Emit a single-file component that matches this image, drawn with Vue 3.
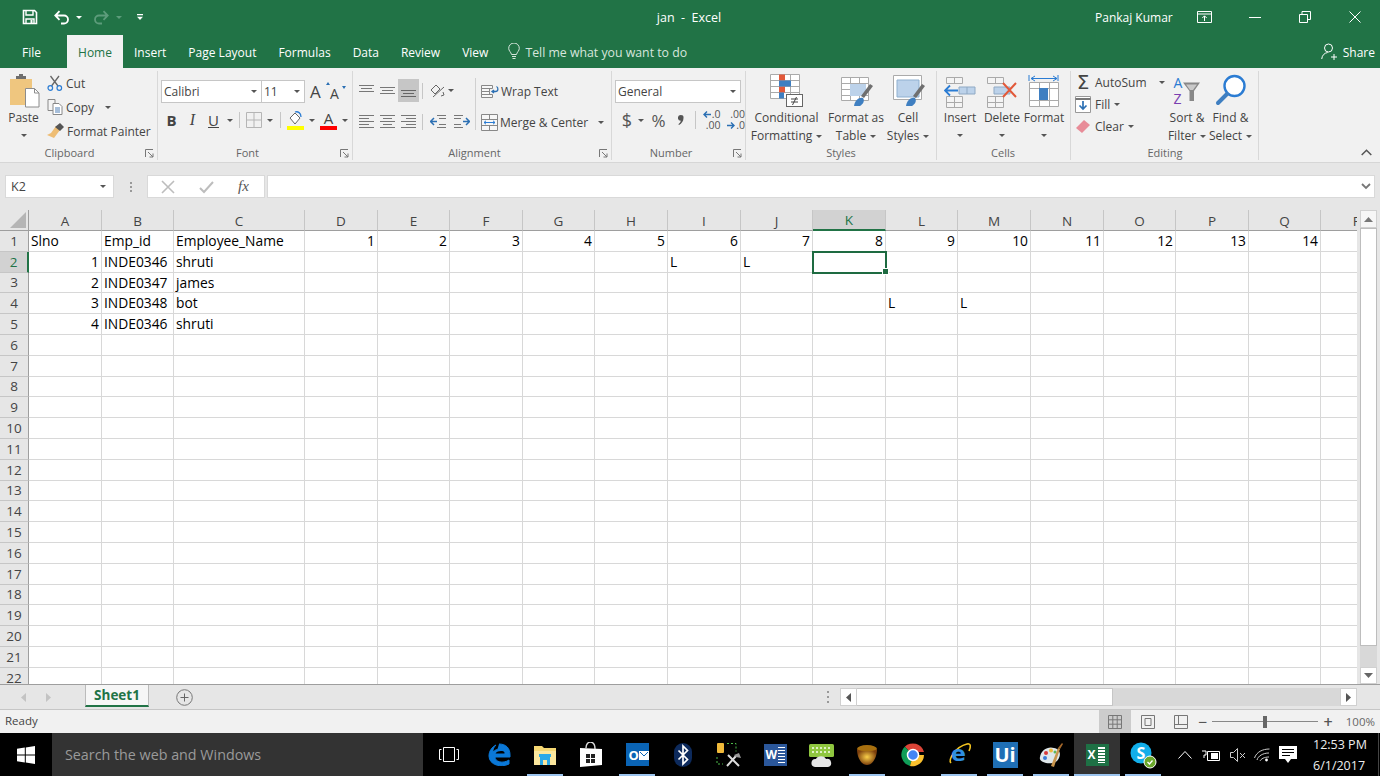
<script setup>
const letters = 'ABCDEFGHIJKLMNOPQR'.split('')

const data = {
  A1: 'Slno', B1: 'Emp_id', C1: 'Employee_Name',
  A2: 1, B2: 'INDE0346', C2: 'shruti', I2: 'L', J2: 'L',
  A3: 2, B3: 'INDE0347', C3: 'james',
  A4: 3, B4: 'INDE0348', C4: 'bot', L4: 'L', M4: 'L',
  A5: 4, B5: 'INDE0346', C5: 'shruti',
}
letters.slice(3, 17).forEach((l, i) => {
  data[l + '1'] = i + 1
})

const rows = Array.from({ length: 22 }, (_, i) => i + 1)
const tabs = ['Insert', 'Page Layout', 'Formulas', 'Data', 'Review', 'View']

function cellValue(col, row) {
  return data[col + row] ?? ''
}
function isNum(col, row) {
  return typeof data[col + row] === 'number'
}
</script>

<template>
  <div class="app">
    <header class="titlebar">
      <div class="top-row">
        <div class="qat">
          <svg class="q-save" width="16" height="16" viewBox="0 0 16 16"><path d="M1.500 1.500h11l2 2v11h-13z" fill="none" stroke="#fff" stroke-width="1.600"/><path d="M4 2v4h7V2M4 14.500V10h8v4.500" fill="none" stroke="#fff" stroke-width="1.400"/><path d="M8.500 11h2v3h-2z" fill="#fff"/></svg>
          <svg class="q-undo" width="16" height="16" viewBox="0 0 16 16"><path d="M1.500 6.500h8.500a4 4 0 0 1 0 8H7M5.500 2.200 1.300 6.500l4.200 4.300" fill="none" stroke="#fff" stroke-width="1.800"/></svg>
          <i class="caret white q-c1"></i>
          <svg class="q-redo" width="16" height="16" viewBox="0 0 16 16"><path d="M14.500 6.500H6a4 4 0 0 0 0 8h3M10.500 2.200l4.200 4.300-4.200 4.300" fill="none" stroke="#5d9c7b" stroke-width="1.800"/></svg>
          <i class="caret dim q-c2"></i>
          <svg class="q-more" width="8" height="8" viewBox="0 0 8 8"><path d="M1 1h6v1.300H1zM1 3.800h6L4 7z" fill="#fff"/></svg>
        </div>
        <div class="doc-title">jan&nbsp; -&nbsp; Excel</div>
        <div class="win-area">
          <span class="user">Pankaj Kumar</span>
          <svg class="w-disp" width="16" height="13" viewBox="0 0 16 13"><path d="M.5.500h14v11H.5zM.5 3h14M7.500 10V5M5.300 7l2.200-2.200L9.700 7" fill="none" stroke="#fff"/></svg>
          <svg class="w-min" width="12" height="12" viewBox="0 0 12 12"><path d="M0 6.500h12" stroke="#fff"/></svg>
          <svg class="w-max" width="12" height="12" viewBox="0 0 12 12"><path d="M.5 3.500h8v8h-8zM3 3.500V.5h8.500v8H8.500" fill="none" stroke="#fff"/></svg>
          <svg class="w-close" width="12" height="12" viewBox="0 0 12 12"><path d="m.5.500 11 11M11.500.5l-11 11" stroke="#fff"/></svg>
        </div>
      </div>
      <nav class="tab-row">
        <span class="tab file">File</span>
        <span class="tab home">Home</span>
        <span v-for="t in tabs" :key="t" class="tab">{{ t }}</span>
        <svg class="bulb" width="12" height="17" viewBox="0 0 12 17"><path d="M3.500 11.500C3 9 .7 8 .7 5.300a5.300 5.300 0 0 1 10.600 0C11.300 8 9 9 8.500 11.500zM4 13.500h4M4.500 15.500h3" fill="none" stroke="#d7e6dd"/></svg>
        <span class="tell">Tell me what you want to do</span>
        <span class="tab-space"></span>
        <svg class="person" width="16" height="17" viewBox="0 0 16 17"><circle cx="7.500" cy="5" r="4" fill="none" stroke="#fff"/><path d="M.7 16c.5-4 2.800-6 6-6.500M10 14h6M13 11v6" fill="none" stroke="#fff"/></svg>
        <span class="share">Share</span>
      </nav>
    </header>

    <section class="ribbon">
      <!-- clipboard -->
      <div class="group g-clip">
        <div class="g-body">
          <div class="big paste">
            <svg class="big-ic" width="34" height="34" viewBox="0 0 34 34"><rect x="3" y="5" width="22" height="26" fill="#efc67f"/><path d="M9 5h10V2h-3V0h-4v2H9z" fill="#6e6e6e"/><path d="M18.500 14.500h9l4.500 4.500v14h-13.500z" fill="#fff" stroke="#8c8c8c"/><path d="M27.500 14.500v4.500H32" fill="none" stroke="#8c8c8c"/></svg>
            <span>Paste</span>
            <i class="caret"></i>
          </div>
          <div class="stack">
            <div class="sm">
              <svg width="16" height="16" viewBox="0 0 16 16"><path d="m3.500 1 7.500 10M12 1 4.500 11" stroke="#666" stroke-width="1.300" fill="none"/><circle cx="3.300" cy="13" r="2.300" fill="none" stroke="#2b7cd3" stroke-width="1.200"/><circle cx="12.300" cy="13" r="2.300" fill="none" stroke="#2b7cd3" stroke-width="1.200"/></svg>
              <span>Cut</span>
            </div>
            <div class="sm">
              <svg width="16" height="16" viewBox="0 0 16 16"><path d="M1 .5h7v11H1z" fill="#f4f4f4" stroke="#888"/><path d="M6 4.500h6l3 3v8H6z" fill="#fff" stroke="#888"/><path d="M8 9h5M8 11h5M8 13h5" stroke="#4f7fb5"/></svg>
              <span>Copy</span><i class="caret gap3"></i>
            </div>
            <div class="sm">
              <svg width="17" height="16" viewBox="0 0 17 16"><path d="m9 3 4 4-6 8-7-3 4-2z" fill="#eebd74"/><path d="m8 4 5-4 4 4-4 4z" fill="#555"/></svg>
              <span class="painter">Format Painter</span>
            </div>
          </div>
        </div>
        <div class="g-label"><span></span><span>Clipboard</span><svg class="launch" width="9" height="9" viewBox="0 0 9 9"><path d="M.5 8V.5H8M3 3l5 5M8 4.500V8H4.500" fill="none" stroke="#777"/></svg></div>
      </div>

      <!-- font -->
      <div class="group g-font">
        <div class="g-body col">
          <div class="line first">
            <div class="combo c-font"><span>Calibri</span><i class="caret"></i></div>
            <div class="combo c-size"><span>11</span><i class="caret"></i></div>
            <span class="grow">A<b class="up"></b></span>
            <span class="shrink">A<b class="down"></b></span>
          </div>
          <div class="line second">
            <span class="ib fmt bold">B</span>
            <span class="ib fmt ital">I</span>
            <span class="ib fmt under">U</span>
            <i class="caret ic"></i>
            <span class="vsep"></span>
            <span class="ib"><svg width="16" height="16" viewBox="0 0 16 16"><path d="M.5.500h15v15H.5zM8 .5v15M.5 8h15" fill="none" stroke="#b5b5b5"/></svg></span>
            <i class="caret ic"></i>
            <span class="vsep s5"></span>
            <span class="ib"><svg width="18" height="19" viewBox="0 0 18 19"><path d="m3 7 5-5 5 5-5 6z" fill="#fff" stroke="#666"/><path d="M8 1c3-1 6 1 6 5" fill="none" stroke="#2b7cd3" stroke-width="1.300"/><path d="M0 15h17v4H0z" fill="#ff0"/></svg></span>
            <i class="caret ic"></i>
            <span class="ib"><span class="colora">A</span></span>
            <i class="caret ic"></i>
          </div>
        </div>
        <div class="g-label"><span></span><span>Font</span><svg class="launch" width="9" height="9" viewBox="0 0 9 9"><path d="M.5 8V.5H8M3 3l5 5M8 4.500V8H4.500" fill="none" stroke="#777"/></svg></div>
      </div>

      <!-- alignment -->
      <div class="group g-align">
        <div class="g-body">
          <div class="col a-left">
            <div class="line first2">
              <span class="ib"><svg width="16" height="14" viewBox="0 0 16 14"><path d="M0 1.500h15M2 4.500h11M0 7.500h15" stroke="#777"/></svg></span>
              <span class="ib"><svg width="16" height="14" viewBox="0 0 16 14"><path d="M0 3.500h15M2 6.500h11M0 9.500h15" stroke="#777"/></svg></span>
              <span class="ib on"><svg width="16" height="14" viewBox="0 0 16 14"><path d="M0 6.500h15M2 9.500h11M0 12.500h15" stroke="#666"/></svg></span>
              <span class="vsep s2"></span>
              <span class="ib"><svg width="16" height="15" viewBox="0 0 16 15"><path d="m2 7 5-5 4 4-5 5zM4 14 15 4" fill="none" stroke="#666"/><path d="m12 13 3-1-1-3" fill="none" stroke="#666"/></svg></span>
              <i class="caret ic2"></i>
            </div>
            <div class="line second2">
              <span class="ib"><svg width="16" height="16" viewBox="0 0 16 16"><path d="M0 1.500h15M0 4.500h10M0 7.500h15M0 10.500h10M0 13.500h15" stroke="#777"/></svg></span>
              <span class="ib"><svg width="16" height="16" viewBox="0 0 16 16"><path d="M0 1.500h15M3 4.500h9M0 7.500h15M3 10.500h9M0 13.500h15" stroke="#777"/></svg></span>
              <span class="ib"><svg width="16" height="16" viewBox="0 0 16 16"><path d="M0 1.500h15M5 4.500h10M0 7.500h15M5 10.500h10M0 13.500h15" stroke="#777"/></svg></span>
              <span class="vsep s3"></span>
              <span class="ib"><svg width="16" height="16" viewBox="0 0 16 16"><path d="M7 1.500h9M9 4.500h7M9 10.500h7M7 13.500h9" stroke="#777"/><path d="M7 7.500H0M4 4 .5 7.500 4 11" fill="none" stroke="#2b6fb3" stroke-width="1.500"/></svg></span>
              <span class="ib gap2"><svg width="16" height="16" viewBox="0 0 16 16"><path d="M0 1.500h9M0 4.500h7M0 10.500h7M0 13.500h9" stroke="#777"/><path d="M9 7.500h7M12 4l3.500 3.500L12 11" fill="none" stroke="#2b6fb3" stroke-width="1.500"/></svg></span>
            </div>
          </div>
          <span class="tall-sep"></span>
          <div class="col a-right">
            <div class="sm wrap">
              <svg width="18" height="17" viewBox="0 0 18 17"><path d="M.5 2.500h11v3H.5zM.5 5.500h8v3h-8zM.5 8.500h8v3h-8zM.5 11.500h11v3H.5z" fill="#f7f7f7" stroke="#888"/><path d="M11 8.500h3.500c3 0 3-4 1-5M13 7l-2 1.500 2 1.500" fill="none" stroke="#2b6fb3" stroke-width="1.300"/></svg>
              <span>Wrap Text</span>
            </div>
            <div class="sm merge">
              <svg width="17" height="17" viewBox="0 0 17 17"><path d="M.5.500h16v16H.5zM.5 5.500h16M.5 11.500h16M8.500.5v5M8.500 11.500v5" fill="#f7f7f7" stroke="#888"/><path d="M3 8.500h11M5 6.800 3 8.500l2 1.700M12 6.800l2 1.700-2 1.700" fill="none" stroke="#2b7cd3"/></svg>
              <span>Merge &amp; Center</span><i class="caret gap3"></i>
            </div>
          </div>
        </div>
        <div class="g-label"><span></span><span>Alignment</span><svg class="launch" width="9" height="9" viewBox="0 0 9 9"><path d="M.5 8V.5H8M3 3l5 5M8 4.500V8H4.500" fill="none" stroke="#777"/></svg></div>
      </div>

      <!-- number -->
      <div class="group g-num">
        <div class="g-body col">
          <div class="line first">
            <div class="combo c-gen"><span>General</span><i class="caret"></i></div>
          </div>
          <div class="line second num-tools">
            <span class="dollar">$</span>
            <i class="caret ic3"></i>
            <span class="pct">%</span>
            <svg class="comma" width="6" height="10" viewBox="0 0 6 10"><path d="M2.800 0a2.700 2.700 0 0 1 2.700 3c0 3-1.800 5.500-4.500 7l-.6-.8C2 8 2.600 7 2.800 5.800A2.900 2.900 0 0 1 2.800 0z" fill="#555"/></svg>
            <span class="vsep s4"></span>
            <div class="dec">
              <div class="dec-row">
                <svg width="8" height="7" viewBox="0 0 8 7"><path d="M8 3.500H1M4 .5l-3 3 3 3" fill="none" stroke="#2b6fb3" stroke-width="1.400"/></svg>
                <span>.0</span>
              </div>
              <span>.00</span>
            </div>
            <div class="dec d2">
              <span>.00</span>
              <div class="dec-row">
                <svg width="8" height="7" viewBox="0 0 8 7"><path d="M0 3.500h7M4 .5l3 3-3 3" fill="none" stroke="#2b6fb3" stroke-width="1.400"/></svg>
                <span>.0</span>
              </div>
            </div>
          </div>
        </div>
        <div class="g-label"><span></span><span>Number</span><svg class="launch" width="9" height="9" viewBox="0 0 9 9"><path d="M.5 8V.5H8M3 3l5 5M8 4.500V8H4.500" fill="none" stroke="#777"/></svg></div>
      </div>

      <!-- styles -->
      <div class="group g-styles">
        <div class="g-body">
          <div class="big b-cond">
            <svg class="big-ic" width="33" height="34" viewBox="0 0 33 34"><path d="M.5.500h29v24H.5zM.5 6.500h29M.5 12.500h29M.5 18.500h29M10.500.5v24M20.500.5v24" fill="#fff" stroke="#aaa"/><path d="M9 .5h6v6H9zM9 12.500h6v6H9z" fill="#e2593a"/><path d="M9 6.500h12v6H9zM9 18.500h5v6H9z" fill="#3f7fc1"/><rect x="16.500" y="20.500" width="16" height="12" fill="#fff" stroke="#666"/><path d="M21 25h7M21 28h7M26.500 23l-4 8" stroke="#444" fill="none"/></svg>
            <span>Conditional</span>
            <span>Formatting<i class="caret gap"></i></span>
          </div>
          <div class="big b-table">
            <svg class="big-ic" width="33" height="34" viewBox="0 0 33 34"><path d="M1.500 3.500h27v23h-27zM1.500 9.500h27M1.500 15.500h27M1.500 21.500h27M10.500 3.500v23M19.500 3.500v23" fill="#fff" stroke="#aaa"/><path d="M10 10h16v12H10z" fill="#bcd2ea"/><path d="m21 22 9-12 3 2-9 12z" fill="#6f6f6f"/><path d="M14 32c1-6 5-9 9-8 2 3 0 6-3 8z" fill="#3f7fc1"/></svg>
            <span>Format as</span>
            <span>Table<i class="caret gap"></i></span>
          </div>
          <div class="big b-cell">
            <svg class="big-ic" width="33" height="34" viewBox="0 0 33 34"><path d="M1.500 1.500h28v24h-28z" fill="#fff" stroke="#aaa"/><path d="M5 6h22v17H5z" fill="#bcd2ea" stroke="#8fb0d0"/><path d="m21 22 9-12 3 2-9 12z" fill="#6f6f6f"/><path d="M14 32c1-6 5-9 9-8 2 3 0 6-3 8z" fill="#3f7fc1"/></svg>
            <span>Cell</span>
            <span>Styles<i class="caret gap"></i></span>
          </div>
        </div>
        <div class="g-label plain">Styles</div>
      </div>

      <!-- cells -->
      <div class="group g-cells">
        <div class="g-body">
          <div class="big b-c">
            <svg class="big-ic" width="32" height="34" viewBox="0 0 32 34"><path d="M2.500 3.500h16v6h-16zM10.500 3.500v6M2.500 22.500h16v11h-16zM10.500 22.500v11M2.500 28.500h16" fill="#f4f4f4" stroke="#aaa"/><path d="M15 13h16v7H15zM23 13v7" fill="#bcd2ea" stroke="#8fa9c4"/><path d="M14 16.500H1M6 11.500l-5 5 5 5" fill="none" stroke="#2b7cd3" stroke-width="1.800"/></svg>
            <span>Insert</span>
            <i class="caret"></i>
          </div>
          <div class="big b-c">
            <svg class="big-ic" width="32" height="34" viewBox="0 0 32 34"><path d="M1.500 3.500h16v6h-16zM9.500 3.500v6M1.500 22.500h16v11h-16zM9.500 22.500v11M1.500 28.500h16" fill="#f4f4f4" stroke="#aaa"/><path d="M8 13h16v7H8z" fill="#bcd2ea" stroke="#8fa9c4"/><path d="m17 9 13 14M30 9 17 23" stroke="#e2593a" stroke-width="2"/></svg>
            <span>Delete</span>
            <i class="caret"></i>
          </div>
          <div class="big b-c">
            <svg class="big-ic" width="32" height="34" viewBox="0 0 32 34"><path d="M1 1v6M30 1v6M3 4.500h26M7 2 3 4.500 7 7M25 2l4 2.500L25 7" fill="none" stroke="#2b7cd3"/><path d="M1.500 8.500h29v24h-29zM11.500 8.500v24M21.500 8.500v24M1.500 14.500h29M1.500 26.500h29" fill="#fff" stroke="#aaa"/><path d="M11 14h9v12h-9z" fill="#3f7fc1"/></svg>
            <span>Format</span>
            <i class="caret"></i>
          </div>
        </div>
        <div class="g-label plain">Cells</div>
      </div>

      <!-- editing -->
      <div class="group g-edit">
        <div class="g-body">
          <div class="stack s-edit">
            <div class="sm e-row">
              <span class="sigma">Σ</span>
              <span>AutoSum</span><i class="caret gap3"></i>
            </div>
            <div class="sm e-row">
              <svg width="16" height="17" viewBox="0 0 16 17"><path d="M.5.500h15v16H.5z" fill="#fff" stroke="#999"/><path d="M.5 3h15" stroke="#777" stroke-width="2"/><path d="M8 5v8M4.500 9.500 8 13l3.500-3.500" fill="none" stroke="#2b6fb3" stroke-width="1.700"/></svg>
              <span>Fill</span><i class="caret"></i>
            </div>
            <div class="sm e-row">
              <svg width="16" height="15" viewBox="0 0 16 15"><path d="M9 1 15 6 7 14 1 9z" fill="#e88c98"/></svg>
              <span>Clear</span><i class="caret"></i>
            </div>
          </div>
          <div class="big b-sort">
            <span class="big-ic sort-ic">
              <span class="az"><b class="a">A</b><b class="z">Z</b></span>
              <svg width="17" height="19" viewBox="0 0 17 19"><path d="M0 .5h17L11 9v10H6.500V9z" fill="#888"/><path d="M3 2.500h11L10 8H7z" fill="#c9c9c9"/></svg>
            </span>
            <span>Sort &amp;</span>
            <span>Filter<i class="caret gap"></i></span>
          </div>
          <div class="big b-find">
            <svg class="big-ic" width="32" height="34" viewBox="0 0 32 34"><circle cx="19.500" cy="12" r="10" fill="#fff" stroke="#2b7cd3" stroke-width="2.400"/><path d="M12 20 3 29" stroke="#3f7fc1" stroke-width="4" stroke-linecap="round"/></svg>
            <span>Find &amp;</span>
            <span>Select<i class="caret gap"></i></span>
          </div>
        </div>
        <div class="g-label plain">Editing</div>
      </div>

      <div class="ribbon-end">
        <svg width="11" height="7" viewBox="0 0 11 7"><path d="m.7 6 4.800-4.800L10.300 6" fill="none" stroke="#555" stroke-width="1.500"/></svg>
      </div>
    </section>

    <section class="formula">
      <div class="namebox"><span>K2</span><i class="caret"></i></div>
      <div class="fdots"><b></b><b></b><b></b></div>
      <div class="fbtns">
        <svg width="14" height="14" viewBox="0 0 14 14"><path d="m1 1 12 12M13 1 1 13" stroke="#bdbdbd" stroke-width="1.600"/></svg>
        <svg width="15" height="14" viewBox="0 0 15 14"><path d="m1 8 4 4 9-10" fill="none" stroke="#bdbdbd" stroke-width="2"/></svg>
        <span class="fx">fx</span>
      </div>
      <div class="finput">
        <svg width="10" height="7" viewBox="0 0 10 7"><path d="m1 1 4 4 4-4" fill="none" stroke="#777" stroke-width="1.800"/></svg>
      </div>
    </section>

    <section class="sheet">
      <div class="grid">
        <div class="h corner"><svg width="16" height="16" viewBox="0 0 16 16"><path d="M16 0v16H0z" fill="#b5b5b5"/></svg></div>
        <div v-for="c in letters" :key="c" class="h col-h" :class="{ active: c === 'K' }">{{ c }}</div>
        <template v-for="r in rows" :key="r">
          <div class="h row-h" :class="{ active: r === 2 }">{{ r }}</div>
          <div
            v-for="c in letters"
            :key="c + r"
            class="cell"
            :class="{ num: isNum(c, r), sel: c === 'K' && r === 2 }"
          >{{ cellValue(c, r) }}</div>
        </template>
      </div>
      <div class="vscroll">
        <div class="sb-btn up-btn"><svg width="9" height="5" viewBox="0 0 9 5"><path d="M4.500 0 9 5H0z" fill="#777"/></svg></div>
        <div class="sb-thumb"></div>
        <div class="sb-rest"></div>
        <div class="sb-btn"><svg width="9" height="5" viewBox="0 0 9 5"><path d="M0 0h9L4.500 5z" fill="#666"/></svg></div>
      </div>
    </section>

    <section class="tabbar">
      <div class="nav-arrows">
        <svg width="5" height="9" viewBox="0 0 5 9"><path d="M5 0v9L0 4.500z" fill="#c3c3c3"/></svg>
        <svg width="5" height="9" viewBox="0 0 5 9"><path d="M0 0v9l5-4.500z" fill="#c3c3c3"/></svg>
      </div>
      <div class="sheet-tab">Sheet1</div>
      <svg class="add" width="17" height="17" viewBox="0 0 17 17"><circle cx="8.500" cy="8.500" r="7.800" fill="none" stroke="#777"/><path d="M8.500 4.500v8M4.500 8.500h8" stroke="#666"/></svg>
      <span class="tab-space"></span>
      <div class="tdots"><b></b><b></b><b></b></div>
      <div class="hscroll">
        <div class="sb-btn h-btn"><svg width="5" height="9" viewBox="0 0 5 9"><path d="M5 0v9L0 4.500z" fill="#555"/></svg></div>
        <div class="h-thumb"></div>
        <div class="h-rest"></div>
        <div class="sb-btn h-btn"><svg width="5" height="9" viewBox="0 0 5 9"><path d="M0 0v9l5-4.500z" fill="#555"/></svg></div>
      </div>
    </section>

    <footer class="status">
      <span class="ready">Ready</span>
      <span class="tab-space"></span>
      <div class="view on"><svg width="14" height="14" viewBox="0 0 14 14"><path d="M.5.500h13v13H.5zM4.800.5v13M9.200.5v13M.5 4.800h13M.5 9.200h13" fill="none" stroke="#777"/></svg></div>
      <div class="view"><svg width="14" height="14" viewBox="0 0 14 14"><path d="M.5.500h13v13H.5zM4 3.500h6v7H4z" fill="none" stroke="#777"/></svg></div>
      <div class="view"><svg width="14" height="14" viewBox="0 0 14 14"><path d="M.5.500h13v13H.5zM.5 9.500h13M4.500.5v9" fill="none" stroke="#777"/></svg></div>
      <span class="zbtn minus">−</span>
      <div class="slider"><b></b></div>
      <span class="zbtn plus">+</span>
      <span class="zoom">100%</span>
    </footer>

    <div class="taskbar">
      <div class="start">
        <svg width="18" height="18" viewBox="0 0 18 18"><path d="M0 2.800 7.800 1.600v7H0zM8.800 1.500 18 0v8.600H8.800zM0 9.500h7.800v7L0 15.200zM8.800 9.500H18V18l-9.200-1.400z" fill="#fff"/></svg>
      </div>
      <div class="search">Search the web and Windows</div>
      <div class="tb taskview"><svg width="20" height="15" viewBox="0 0 20 15"><path d="M4.500.5h11v14h-11zM2.500 2.500H.5v10h2M17.500 2.500h2v10h-2" fill="none" stroke="#fff"/></svg></div>
      <div class="tb"><svg width="23" height="23" viewBox="0 0 23 23"><path d="M11 1c7 0 11 4 11 11v2H7c0 5 8 7 14 3v4c-8 4-20 1-20-8C1 8 4 4 8 2 5 5 5 7 5 9c2-2 4-3 7-3 4 0 5 3 4 5H8" fill="#0a78d7" stroke="#0a78d7" stroke-linejoin="round"/><path d="M7.500 10.500h9v-1c-1-2-7-2-9 1z" fill="#000"/></svg></div>
      <div class="tb on"><svg width="24" height="20" viewBox="0 0 24 20"><path d="M1 1h8l2 2h12v17H1z" fill="#f6d873"/><path d="M1 6h22v14H1z" fill="#fbe79d"/><path d="M6 9h12v3h-1v8h-3v-5h-4v5H7v-8H6z" fill="#2aa9e8"/></svg></div>
      <div class="tb"><svg width="24" height="25" viewBox="0 0 24 25"><path d="M1 6 23 7v16L1 25z" fill="#fff"/><path d="M7 6c0-8 9-8 9 1" fill="none" stroke="#ddd" stroke-width="1.400"/><path d="M7 12h4v4H7zM12 12h4v4h-4zM7 17h4v4H7zM12 17h4v4h-4z" fill="#222"/></svg></div>
      <div class="tb on"><span class="o-box"><b>O</b><svg width="10" height="10" viewBox="0 0 10 10"><path d="M0 1h10v9H0z" fill="#fff"/><path d="m1 2 4 4 4-4" fill="none" stroke="#0a64b5"/></svg></span></div>
      <div class="tb"><svg width="18" height="24" viewBox="0 0 18 24"><rect width="18" height="24" rx="9" fill="#0d2a5c"/><path d="m4.500 7.500 9 9-4.500 4.500V3l4.500 4.500-9 9" fill="none" stroke="#fff" stroke-width="1.700"/></svg></div>
      <div class="tb"><svg width="26" height="26" viewBox="0 0 26 26"><rect x="1" y="1" width="7" height="10" rx="1" fill="#f0b93a"/><path d="M11 1.500h9v8M1 15v7h6" fill="none" stroke="#4db848" stroke-dasharray="2 2"/><path d="m11 24 9-10M12 13l11 11" stroke="#ddd" stroke-width="2"/><path d="m18 13 5-2 2 5-5-1z" fill="#999"/></svg></div>
      <div class="tb"><span class="w-box"><b>W</b><i></i></span></div>
      <div class="tb"><svg width="25" height="24" viewBox="0 0 25 24"><rect y="1" width="25" height="13" rx="1.500" fill="#8fc63f"/><path d="M3 4h2v2H3zM7 4h2v2H7zM11 4h2v2h-2zM15 4h2v2h-2zM19 4h2v2h-2zM3 8h2v2H3zM7 8h2v2H7zM11 8h2v2h-2zM15 8h2v2h-2zM19 8h2v2h-2z" fill="#dff0c4"/><path d="M6 24a4 4 0 0 1 1-8c1-3 8-4 10 0a4 4 0 0 1 2 8z" fill="#e6e6e6"/></svg></div>
      <div class="tb on"><svg width="22" height="20" viewBox="0 0 22 20"><defs><radialGradient id="pot"><stop offset="0" stop-color="#fad04a"/><stop offset="1" stop-color="#7c3f0c"/></radialGradient></defs><ellipse cx="11" cy="4" rx="10" ry="4" fill="#a8700f"/><path d="M1 4c0 8 4 16 10 16s10-8 10-16c-4 3-16 3-20 0z" fill="url(#pot)"/></svg></div>
      <div class="tb"><svg width="24" height="24" viewBox="0 0 24 24"><path d="M12 12 3.800 3.700A11.500 11.500 0 0 1 23 9H12z" fill="#db4437"/><path d="M12 12 3.800 3.700A11.500 11.500 0 0 0 9 23z" fill="#0f9d58"/><path d="M12 12H23A11.500 11.500 0 0 1 9 23z" fill="#fbc02d"/><circle cx="12" cy="12" r="5.500" fill="#4285f4" stroke="#fff" stroke-width="1.500"/></svg></div>
      <div class="tb on"><svg width="25" height="25" viewBox="0 0 25 25"><path d="M4 21C1 18 8 5 20 2c4-1 4 3 2 7" fill="none" stroke="#f3c31f" stroke-width="1.600"/><text x="4" y="19" class="ie">e</text></svg></div>
      <div class="tb on"><span class="ui-box">Ui</span></div>
      <div class="tb on"><svg width="25" height="25" viewBox="0 0 25 25"><path d="M1 15C2 8 9 4 15 6c6 1 7 6 5 10-2 5-8 6-13 5-4-1-7-3-6-6z" fill="#dfe7ea"/><circle cx="7" cy="11" r="2" fill="#d83b3b"/><circle cx="12" cy="8.500" r="2" fill="#f0b93a"/><circle cx="6" cy="16" r="2" fill="#3b7dd8"/><circle cx="16" cy="10" r="1.500" fill="#5cb85c"/><path d="m12 24 7-18 2 1-6 18z" fill="#c8954e"/><path d="m19 6 4-5 1 1-3 5z" fill="#a5682a"/></svg></div>
      <div class="tb on excel"><span class="x-box"><b>X</b><i></i></span></div>
      <div class="tb on"><svg width="28" height="28" viewBox="0 0 28 28"><circle cx="12" cy="12" r="10.500" fill="#12aeea"/><text x="12" y="17.500" class="sk">S</text><circle cx="21" cy="21" r="6" fill="#6ba82c" stroke="#fff"/><path d="m18.500 21 2 2 3-3.500" fill="none" stroke="#fff" stroke-width="1.300"/></svg></div>
      <div class="tray">
        <svg class="t-up" width="14" height="8" viewBox="0 0 14 8"><path d="m.5 7.500 6.500-7 6.500 7" fill="none" stroke="#fff"/></svg>
        <svg class="t-pow" width="18" height="12" viewBox="0 0 18 12"><path d="M5.500 2.500h12v9h-12z" fill="none" stroke="#fff"/><path d="M9 4h7v6H9z" fill="#fff"/><path d="M0 2h4v4H2v3" fill="none" stroke="#fff"/></svg>
        <svg class="t-snd" width="16" height="14" viewBox="0 0 16 14"><path d="M.5 4.500h3l4-4v13l-4-4h-3z" fill="none" stroke="#ccc"/><path d="m10 5 5 5M15 5l-5 5" stroke="#ccc"/></svg>
        <svg class="t-wifi" width="16" height="14" viewBox="0 0 16 14"><path d="M.5 10c2-6 8-9 15-9M3 12c1-4 6-7 12-7M6 13c1-2 4-4 9-4" fill="none" stroke="#ccc"/><circle cx="12.500" cy="12" r="1.400" fill="#fff"/></svg>
        <svg class="t-note" width="18" height="17" viewBox="0 0 18 17"><path d="M0 0h18v13h-6l-3 4-3-4H0z" fill="#fff"/><path d="M3 3.500h12M3 6.500h12M3 9.500h8" stroke="#000"/></svg>
        <div class="clock"><span>12:53 PM</span><span>6/1/2017</span></div>
        <i class="t-show"></i>
      </div>
    </div>
  </div>
</template>

<style scoped>
.app {
  width: 1380px; height: 776px; overflow: hidden;
  display: flex; flex-direction: column;
  font-family: "Open Sans", "Noto Sans", sans-serif;
  font-size: 12px; color: #444;
}
svg { display: block; flex-shrink: 0; }
.caret {
  display: inline-block; width: 0; height: 0; flex-shrink: 0;
  border-left: 3px solid transparent; border-right: 3px solid transparent; border-top: 3px solid #555;
}
.caret.white { border-top-color: #fff; }
.caret.dim { border-top-color: #5d9c7b; }
.caret.gap { margin-left: 4px; vertical-align: middle; }
.caret.gap3 { margin-left: 8px; }

/* title bar */
.titlebar { height: 68px; background: #217346; color: #fff; flex-shrink: 0; }
.top-row { height: 34px; display: flex; align-items: center; padding-bottom: 1px; }
.qat { width: 150px; display: flex; align-items: center; padding-left: 22px; box-sizing: border-box; }
.q-undo { margin-left: 16px; }
.q-c1 { margin-left: 6px; }
.q-redo { margin-left: 11px; }
.q-c2 { margin-left: 7px; }
.q-more { margin-left: 14px; }
.doc-title { width: 1078px; text-align: center; font-size: 12.500px; }
.win-area { flex: 1; display: flex; align-items: center; margin-left: -133px; }
.user { width: 101px; font-size: 12px; white-space: nowrap; }
.w-disp { margin-left: 1px; }
.w-min { margin-left: 36px; }
.w-max { margin-left: 38px; }
.w-close { margin-left: 38px; }

.tab-row { height: 33px; display: flex; align-items: center; }
.tab { font-size: 12px; margin-right: 22px; white-space: nowrap; line-height: 35px; height: 33px; }
.tab.file { margin-left: 22px; margin-right: 26px; }
.tab.home {
  background: #f1f1f1; color: #217346; width: 56px; text-align: center;
  margin-right: 11px;
}
.bulb { margin-left: -2px; }
.tell { margin-left: 5px; color: #d7e6dd; font-size: 12.300px; padding-top: 1px; }
.tab-space { flex: 1; }
.person { margin-right: 6px; }
.share { margin-right: 5px; font-size: 12px; padding-top: 1px; }

/* ribbon */
.ribbon {
  height: 95px; flex-shrink: 0; display: flex; box-sizing: border-box;
  background: #f1f1f1; border-bottom: 1px solid #d6d6d6; padding-top: 3px;
}
.group {
  display: flex; flex-direction: column; box-sizing: border-box; flex-shrink: 0;
  height: 89px; border-right: 1px solid #d8d8d8;
}
.g-clip { width: 158px; }
.g-font { width: 195px; padding-left: 3px; }
.g-align { width: 259px; padding-left: 3px; }
.g-num { width: 134px; padding-left: 3px; }
.g-styles { width: 191px; padding-left: 3px; }
.g-cells { width: 134px; padding-left: 2px; }
.g-edit { width: 188px; padding-left: 4px; }
.g-body { height: 75px; display: flex; white-space: nowrap; }
.col { display: flex; flex-direction: column; }
.g-label {
  height: 14px; display: grid; grid-template-columns: 0 1fr 18px; align-items: center;
  text-align: center; font-size: 11px; color: #666; line-height: 14px;
}
.g-label.plain { display: block; margin-left: -3px; }
.launch { justify-self: end; margin-right: 3px; }

.big { display: flex; flex-direction: column; align-items: center; line-height: 18px; flex-shrink: 0; padding-top: 3px; }
.big-ic { height: 34px; margin-bottom: 1px; }
.big > .caret { margin-top: 7px; }
.paste { width: 47px; }
.stack { display: flex; flex-direction: column; }
.sm { display: flex; align-items: center; gap: 3px; height: 24px; }
.painter { margin-left: 0; }

.line { display: flex; align-items: center; }
.first { margin-top: 9px; height: 23px; }
.first2 { margin-top: 8px; height: 23px; }
.second { margin-top: 6px; height: 22px; }
.second2 { margin-top: 9px; height: 22px; }
.combo {
  height: 23px; box-sizing: border-box; background: #fff; border: 1px solid #c6c6c6;
  display: flex; align-items: center; justify-content: space-between; padding: 0 4px 0 2px;
}
.c-font { width: 101px; }
.c-size { width: 44px; margin-left: -1px; }
.c-gen { width: 126px; }
.grow { font-size: 17px; margin-left: 5px; position: relative; width: 18px; }
.shrink { font-size: 14px; margin-left: 2px; position: relative; width: 14px; margin-top: 3px; }
.grow b, .shrink b { position: absolute; right: -2px; top: 2px; width: 0; height: 0; border-left: 2.500px solid transparent; border-right: 2.500px solid transparent; }
.up { border-bottom: 3px solid #2b6fb3; }
.down { border-top: 3px solid #2b6fb3; }
.ib { width: 21px; height: 22px; display: flex; align-items: center; justify-content: center; flex-shrink: 0; }
.ib.on { background: #c6c6c6; height: 23px; }
.fmt { font-size: 15px; color: #444; }
.bold { font-weight: 700; }
.ital { font-style: italic; font-family: "Liberation Serif", serif; font-size: 16px; }
.under { text-decoration: underline; }
.ic { margin: 0 3px; }
.vsep { width: 1px; height: 16px; background: #c6c6c6; margin: 0 3px; }
.s5 { margin: 0 4px; }
.colora { font-size: 15px; line-height: 15px; border-bottom: 4px solid #f00; width: 17px; text-align: center; }
.s2 { margin: 0 3px 0 3px; }
.s3 { margin: 0 4px 0 3px; }
.ic2 { margin-left: 1px; }
.gap2 { margin-left: 3px; }
.a-left { width: 119px; }
.tall-sep { width: 1px; height: 52px; background: #d0d0d0; margin: 7px 5px 0 0; }
.a-right { padding-top: 9px; }
.sm.wrap { height: 22px; gap: 2px; }
.sm.merge { height: 22px; margin-top: 9px; gap: 2px; }
.num-tools { padding-left: 3px; }
.dollar { font-size: 18px; width: 20px; text-align: center; color: #555; }
.ic3 { margin-left: 2px; }
.pct { font-size: 17px; margin-left: 5px; width: 22px; text-align: center; color: #555; }
.comma { margin-left: 10px; }
.s4 { margin: 0 5px 0 11px; height: 18px; }
.dec { display: flex; flex-direction: column; align-items: flex-end; font-size: 10.500px; line-height: 11px; width: 22px; color: #555; }
.dec-row { display: flex; align-items: center; gap: 1px; }
.d2 { margin-left: 5px; }
.b-cond { width: 73px; margin-left: 1px; }
.b-table { width: 66px; }
.b-cell { width: 38px; }
.b-c { width: 42px; }
.s-edit { width: 90px; }
.sm.e-row { height: 22px; gap: 4px; }
.sigma { font-size: 20px; width: 16px; text-align: center; color: #444; font-family: "DejaVu Sans", sans-serif; line-height: 18px; }
.b-sort { width: 44px; }
.b-find { width: 43px; }
.sort-ic { display: flex; align-items: center; gap: 1px; }
.az { display: flex; flex-direction: column; line-height: 16px; font-size: 14px; }
.az b { font-weight: 400; }
.az .a { color: #2b7cd3; }
.az .z { color: #7a3fb0; }
.ribbon-end { flex: 1; display: flex; justify-content: flex-end; align-items: flex-end; padding: 0 8px 6px 0; }

/* formula bar */
.formula {
  height: 47px; flex-shrink: 0; background: #e6e6e6; box-sizing: border-box;
  display: flex; align-items: flex-start; padding-top: 12px;
}
.namebox {
  width: 109px; height: 23px; margin-left: 5px; background: #fff; box-sizing: border-box; border: 1px solid #d9d9d9;
  display: flex; align-items: center; justify-content: space-between; padding: 0 7px 0 5px; font-size: 12.500px;
}
.fdots { width: 33px; height: 23px; display: flex; flex-direction: column; align-items: center; justify-content: center; gap: 2px; }
.fdots b, .tdots b { width: 2px; height: 2px; background: #999; }
.fbtns {
  width: 118px; height: 23px; background: #fff; box-sizing: border-box; border: 1px solid #d9d9d9;
  display: flex; align-items: center; gap: 0; padding-left: 13px;
}
.fbtns svg + svg { margin-left: 24px; }
.fx { font-family: "Liberation Serif", serif; font-style: italic; font-size: 15px; margin-left: 24px; color: #555; }
.finput {
  flex: 1; height: 23px; margin: 0 5px 0 2px; background: #fff; box-sizing: border-box; border: 1px solid #d9d9d9;
  display: flex; align-items: center; justify-content: flex-end; padding-right: 3px;
}

/* grid */
.sheet { height: 475px; flex-shrink: 0; display: flex; background: #e6e6e6; border-bottom: 1px solid #9e9e9e; box-sizing: border-box; }
.grid {
  width: 1357px; height: 474px; overflow: hidden; background: #fff; flex-shrink: 0;
  display: grid; box-sizing: border-box;
  grid-template-columns: 29px 73px 72px 131px 73px 72px 73px 72px 73px 73px 72px 73px 72px 73px 73px 72px 73px 72px 73px;
  grid-template-rows: 21px repeat(22, 20.8px);
  font-family: "Open Sans", sans-serif; font-size: 13.800px; color: #000;
}
.h {
  background: #e6e6e6; color: #444; display: flex; align-items: center; justify-content: center;
  box-sizing: border-box; font-family: "Open Sans", sans-serif; font-size: 13.500px;
}
.col-h { padding-top: 1px; }
.corner { justify-content: flex-end; align-items: flex-end; padding: 0 2px 2px 0; border-bottom: 1px solid #9e9e9e; border-right: 1px solid #9e9e9e; }
.col-h { border-right: 1px solid #c6c6c6; border-bottom: 1px solid #9e9e9e; }
.row-h { border-right: 1px solid #9e9e9e; border-bottom: 1px solid #c6c6c6; }
.col-h.active { background: #d2d2d2; color: #217346; border-bottom: 2px solid #217346; }
.row-h.active { background: #d2d2d2; color: #217346; border-right: 2px solid #217346; }
.cell {
  box-sizing: border-box; border-right: 1px solid #d8d8d8; border-bottom: 1px solid #d8d8d8;
  padding: 0 2px; line-height: 20px; white-space: nowrap; overflow: visible;
}
.cell.num { text-align: right; padding-right: 2px; }
.cell.sel { outline: 2px solid #1e6b41; outline-offset: -1px; position: relative; }
.cell.sel::after {
  content: ""; position: absolute; right: -4px; bottom: -3px; width: 5px; height: 5px;
  background: #1e6b41; border: 1px solid #fff;
}

.vscroll { flex: 1; display: flex; flex-direction: column; padding: 0 3px; min-width: 0; }
.sb-btn { height: 17px; background: #fff; border: 1px solid #d0d0d0; display: flex; align-items: center; justify-content: center; box-sizing: border-box; flex-shrink: 0; }
.up-btn { height: 18px; background: #f6f6f6; }
.sb-thumb { height: 418px; background: #fff; border: 1px solid #bdbdbd; box-sizing: border-box; flex-shrink: 0; }
.sb-rest { flex: 1; background: #d8d8d8; }

/* sheet tabs */
.tabbar { height: 25px; flex-shrink: 0; background: #e6e6e6; display: flex; align-items: center; border-bottom: 1px solid #c6c6c6; box-sizing: border-box; }
.nav-arrows { width: 85px; display: flex; gap: 20px; padding-left: 21px; box-sizing: border-box; }
.sheet-tab {
  width: 64px; height: 22px; margin-top: -2px; background: #f6f6f6; color: #217346; font-weight: 700; font-size: 13.500px;
  text-align: center; line-height: 21px; box-sizing: border-box; border-bottom: 2px solid #217346;
  border-left: 1px solid #bbb; border-right: 1px solid #bbb;
}
.add { margin-left: 27px; }
.tdots { display: flex; flex-direction: column; gap: 3px; margin-right: 11px; }
.hscroll { width: 517px; height: 18px; margin-right: 23px; display: flex; }
.h-btn { width: 17px; height: 18px; }
.h-thumb { width: 256px; background: #fff; border: 1px solid #c6c6c6; border-left: 0; box-sizing: border-box; }
.h-rest { flex: 1; background: #d8d8d8; }

/* status bar */
.status { height: 23px; flex-shrink: 0; background: #f1f1f1; display: flex; align-items: center; font-size: 11.500px; }
.ready { margin-left: 5px; margin-top: -2px; }
.view { width: 32px; height: 23px; display: flex; align-items: center; justify-content: center; margin-right: 1px; }
.view.on { background: #ccc; margin-left: 0; }
.zbtn { font-size: 16px; width: 16px; text-align: center; color: #555; line-height: 16px; }
.minus { width: 12px; text-align: left; }
.slider { width: 106px; height: 1px; background: #888; margin: 0 2px; display: flex; justify-content: center; align-items: center; }
.slider b { width: 4px; height: 12px; background: #666; flex-shrink: 0; }
.plus { font-weight: 600; margin-right: 0; }
.zoom { width: 44px; text-align: right; padding-right: 5px; box-sizing: border-box; color: #666; }

/* taskbar */
.taskbar { height: 43px; flex-shrink: 0; background: #000; display: flex; align-items: center; }
.start { width: 52px; height: 43px; display: flex; align-items: center; justify-content: center; }
.search {
  width: 371px; height: 43px; background: #333; color: #9a9a9a; font-size: 14.300px; line-height: 43px;
  padding-left: 13px; box-sizing: border-box;
}
.tb { width: 46px; height: 43px; flex-shrink: 0; display: flex; align-items: center; justify-content: center; position: relative; }
.tb.on::after { content: ""; position: absolute; left: 5px; right: 5px; bottom: 0; height: 2px; background: #9cc4ee; }
.taskview { margin: 0 4px 0 3px; }
.tb.excel { background: #333; }
.tb.excel::after { left: 0; right: 0; }
.o-box { width: 23px; height: 23px; background: #0a64b5; color: #fff; display: flex; align-items: center; gap: 0; font-size: 13px; }
.o-box b { margin-left: 3px; }
.w-box { width: 23px; height: 22px; background: #2b579a; color: #fff; display: flex; align-items: center; font-size: 12px; padding-left: 2px; box-sizing: border-box; gap: 1px; }
.w-box i { width: 7px; height: 16px; background: repeating-linear-gradient(#fff 0 1px, #2b579a 1px 3px); }
.x-box { width: 23px; height: 22px; background: #1e7145; color: #fff; display: flex; align-items: center; font-size: 12px; padding-left: 2px; box-sizing: border-box; gap: 2px; }
.x-box i { width: 7px; height: 16px; background: repeating-linear-gradient(#fff 0 2px, #1e7145 2px 3px); }
.ui-box { width: 25px; height: 26px; background: #1f6fb5; color: #fff; font-size: 20px; font-weight: 700; text-align: center; line-height: 26px; }
.ie { font-size: 22px; fill: #2f8fe0; font-family: "DejaVu Sans", sans-serif; font-weight: 700; }
.sk { font-size: 16px; fill: #fff; text-anchor: middle; font-weight: 700; font-family: "Open Sans", sans-serif; }
.tray { flex: 1; display: flex; align-items: center; color: #fff; }
.t-up { margin-left: 12px; }
.t-pow { margin-left: 10px; }
.t-snd { margin-left: 10px; }
.t-wifi { margin-left: 8px; }
.t-note { margin-left: 9px; }
.clock { width: 60px; margin-left: 16px; display: flex; flex-direction: column; align-items: flex-start; font-size: 12.500px; line-height: 21px; color: #eee; }
.t-show { width: 1px; height: 43px; background: #444; margin-left: 5px; }
</style>

<style>
body { margin: 0; }
</style>
